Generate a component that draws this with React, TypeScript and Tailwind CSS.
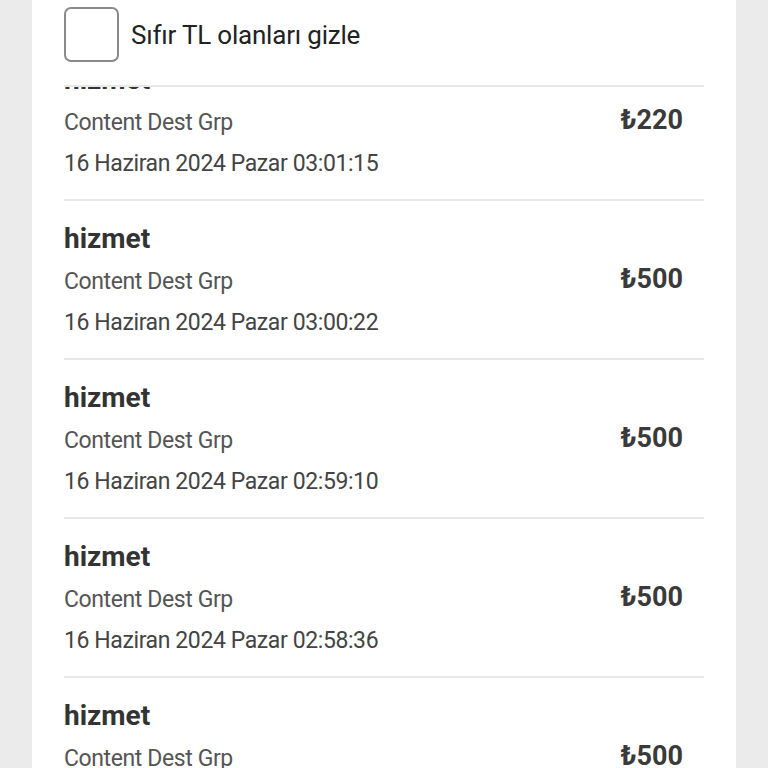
import React from "react"

const items = [
  { title: "hizmet", sub: "Content Dest Grp", date: "16 Haziran 2024 Pazar 03:01:15", amount: "220" },
  { title: "hizmet", sub: "Content Dest Grp", date: "16 Haziran 2024 Pazar 03:00:22", amount: "500" },
  { title: "hizmet", sub: "Content Dest Grp", date: "16 Haziran 2024 Pazar 02:59:10", amount: "500" },
  { title: "hizmet", sub: "Content Dest Grp", date: "16 Haziran 2024 Pazar 02:58:36", amount: "500" },
  { title: "hizmet", sub: "Content Dest Grp", date: "16 Haziran 2024 Pazar 02:57:48", amount: "500" },
]

export default function App() {
  return (
    <div
      className="h-[768px] w-[768px] overflow-hidden bg-[#ebebeb] px-8"
      style={{ fontFamily: "Roboto, 'Noto Sans', sans-serif" }}
    >
      <div className="flex h-full flex-col bg-white px-8">
        {/* Filter */}
        <label className="flex h-[85px] shrink-0 items-start gap-3 pt-[7px]">
          <span className="h-[55px] w-[55px] shrink-0 rounded-[7px] border-2 border-[#8a8a8a] bg-white" />
          <span className="mt-[13px] text-[26px] leading-[30px] tracking-[-0.2px] text-[#222]">Sıfır TL olanları gizle</span>
        </label>

        {/* List */}
        <div className="flex-1 overflow-hidden border-t-2 border-[#e8e8e8]">
          <div className="-mt-[45px]">
            {items.map((item, i) => (
              <div key={i} className="flex h-[159px] items-start justify-between border-b-2 border-[#e8e8e8]">
                <div className="flex flex-col pt-[21px]">
                  <span className="text-[28px] font-bold leading-[34px] text-[#333]">{item.title}</span>
                  <span className="mt-[10px] text-[23px] leading-[32px] tracking-[-0.4px] text-[#555]">{item.sub}</span>
                  <span className="mt-[9px] text-[23px] leading-[32px] tracking-[-0.4px] text-[#444]">{item.date}</span>
                </div>
                <span className="mr-[21px] pt-[61px] text-[27px] font-bold leading-[34px] text-[#3a3a3a]">
                  ₺{item.amount}
                </span>
              </div>
            ))}
          </div>
        </div>
      </div>
    </div>
  )
}
